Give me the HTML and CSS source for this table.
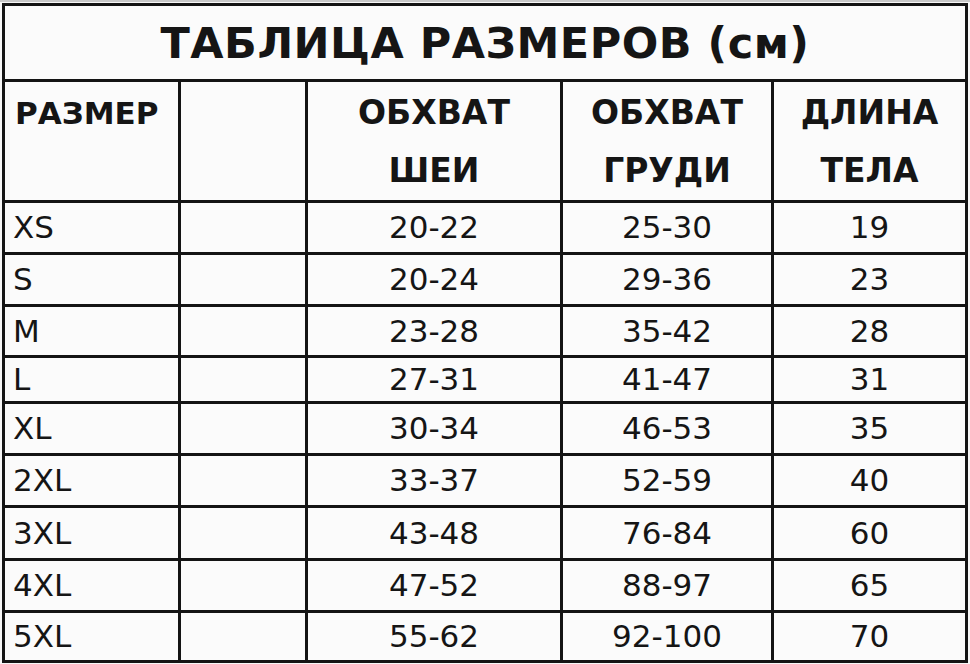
FILE: index.html
```html
<!DOCTYPE html>
<html lang="ru">
<head>
<meta charset="utf-8">
<title>Таблица размеров</title>
<link rel="stylesheet" href="styles.css">
</head>
<body>
<div class="sheet">
  <table class="sizes">
    <colgroup>
      <col class="c1"><col class="c2"><col class="c3"><col class="c4"><col class="c5">
    </colgroup>
    <tr class="r-title"><td class="title" colspan="5">ТАБЛИЦА РАЗМЕРОВ (см)</td></tr>
    <tr class="r-head">
      <td class="head left">РАЗМЕР</td>
      <td class="head"></td>
      <td class="head">ОБХВАТ<br>ШЕИ</td>
      <td class="head">ОБХВАТ<br>ГРУДИ</td>
      <td class="head last">ДЛИНА<br>ТЕЛА</td>
    </tr>
    <tr class="r h52"><td class="left">XS</td><td></td><td>20-22</td><td>25-30</td><td class="last">19</td></tr>
    <tr class="r h52"><td class="left">S</td><td></td><td>20-24</td><td>29-36</td><td class="last">23</td></tr>
    <tr class="r h51"><td class="left">M</td><td></td><td>23-28</td><td>35-42</td><td class="last">28</td></tr>
    <tr class="r h46"><td class="left">L</td><td></td><td>27-31</td><td>41-47</td><td class="last">31</td></tr>
    <tr class="r h52"><td class="left">XL</td><td></td><td>30-34</td><td>46-53</td><td class="last">35</td></tr>
    <tr class="r h52"><td class="left">2XL</td><td></td><td>33-37</td><td>52-59</td><td class="last">40</td></tr>
    <tr class="r h53"><td class="left">3XL</td><td></td><td>43-48</td><td>76-84</td><td class="last">60</td></tr>
    <tr class="r h52"><td class="left">4XL</td><td></td><td>47-52</td><td>88-97</td><td class="last">65</td></tr>
    <tr class="r h47 bottom"><td class="left">5XL</td><td></td><td>55-62</td><td>92-100</td><td class="last">70</td></tr>
  </table>
</div>
</body>
</html>
```
FILE: styles.css
```css
html, body {
  margin: 0;
  padding: 0;
  background: #f4f4f4;
}
.sheet {
  width: 970px;
  height: 664px;
  padding: 3px 0 0 2px;
  box-sizing: border-box;
  border-top: 0;
  background: linear-gradient(#c8c8c8, #c8c8c8) top left / 100% 2px no-repeat, #f7f7f7;
}
.sizes {
  width: 966px;
  table-layout: fixed;
  border-collapse: separate;
  border-spacing: 0;
  border: 3px solid #141414;
  background: #fbfbfb;
  font-family: "DejaVu Sans", "Noto Sans", sans-serif;
  color: #151515;
}
.c1 { width: 176px; }
.c2 { width: 127px; }
.c3 { width: 255px; }
.c4 { width: 211px; }
.c5 { width: 191px; }
.sizes td {
  box-sizing: border-box;
  padding: 0;
  border-right: 3px solid #141414;
  border-bottom: 3px solid #141414;
  text-align: center;
  vertical-align: middle;
  font-size: 31px;
  line-height: 1;
  white-space: nowrap;
  overflow: hidden;
}
.sizes td.last { border-right: none; }
.sizes .bottom td { border-bottom: none; }
.sizes td.left {
  text-align: left;
  padding-left: 8px;
}
.r-title td { height: 76px; }
.sizes td.title {
  border-right: none;
  font-size: 43px;
  font-weight: bold;
  letter-spacing: 0.5px;
  padding-top: 2px;
}
.r-head td { height: 121px; }
.sizes td.head {
  vertical-align: top;
  font-size: 33px;
  font-weight: bold;
  line-height: 58px;
  padding-top: 2px;
}
.sizes td.head.left { padding-left: 10px; font-size: 31px; }
.h52 td { height: 52px; }
.h51 td { height: 51px; }
.h46 td { height: 46px; }
.h53 td { height: 53px; }
.h47 td { height: 47px; }
```
